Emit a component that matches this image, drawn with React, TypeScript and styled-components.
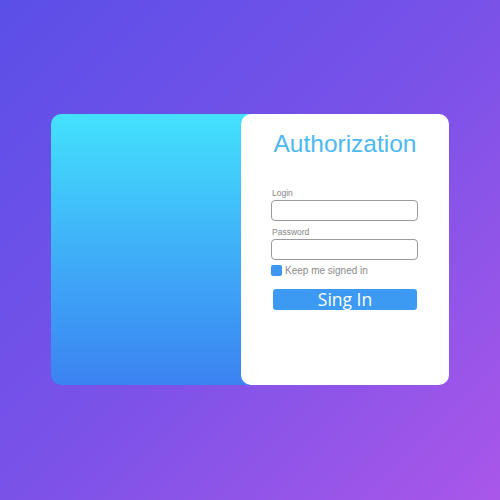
import React from 'react';
import styled, { createGlobalStyle } from 'styled-components';

const GlobalStyle = createGlobalStyle`
  html, body {
    margin: 0;
    padding: 0;
  }
  body {
    font-family: "Liberation Sans", Arial, sans-serif;
  }
`;

const Page = styled.div`
  width: 500px;
  height: 500px;
  display: flex;
  align-items: flex-start;
  justify-content: center;
  padding-top: 114px;
  box-sizing: border-box;
  background: linear-gradient(135deg, #5a4fe8 0%, #7a52e8 50%, #a957e9 100%);
`;

const Card = styled.div`
  width: 398px;
  height: 271px;
  display: flex;
`;

const Side = styled.div`
  width: 200px;
  margin-right: -10px;
  border-radius: 10px 0 0 10px;
  background: linear-gradient(180deg, #44e1fd 0%, #3fb0f8 50%, #3b82f1 100%);
`;

const Panel = styled.div`
  flex: 1;
  position: relative;
  background: #fff;
  border-radius: 10px;
  display: flex;
  flex-direction: column;
  padding: 16px 30px 0 30px;
`;

const Title = styled.h1`
  margin: 0 0 30px 0;
  font-family: "Liberation Sans", Arial, sans-serif;
  font-weight: 400;
  font-size: 24.5px;
  color: #4cb9f1;
  text-align: center;
`;

const Label = styled.label`
  font-size: 8.5px;
  color: #858585;
  margin: 0 0 2px 1px;
`;

const Input = styled.input`
  width: 147px;
  height: 21px;
  box-sizing: border-box;
  border: 1px solid #9a9a9a;
  border-radius: 4px;
  margin-bottom: 6px;
  outline: none;
`;

const CheckRow = styled.div`
  display: flex;
  align-items: center;
  gap: 3px;
  margin: -1px 0 13px 0;
`;

const Box = styled.span`
  width: 11px;
  height: 11px;
  border-radius: 2px;
  background: #3d97f0;
`;

const CheckText = styled.span`
  font-size: 10px;
  color: #8a8a8a;
`;

const Button = styled.button`
  width: 144px;
  height: 21px;
  margin-left: 2px;
  border: none;
  border-radius: 3px;
  background: #3d9af3;
  color: #fff;
  font-family: "Open Sans", sans-serif;
  font-size: 17.5px;
  line-height: 21px;
  padding: 0;
`;

export default function App() {
  return (
    <>
      <GlobalStyle />
      <Page>
        <Card>
          <Side />
          <Panel>
            <Title>Authorization</Title>
            <Label>Login</Label>
            <Input />
            <Label>Password</Label>
            <Input type="password" />
            <CheckRow>
              <Box />
              <CheckText>Keep me signed in</CheckText>
            </CheckRow>
            <Button>Sing In</Button>
          </Panel>
        </Card>
      </Page>
    </>
  );
}
